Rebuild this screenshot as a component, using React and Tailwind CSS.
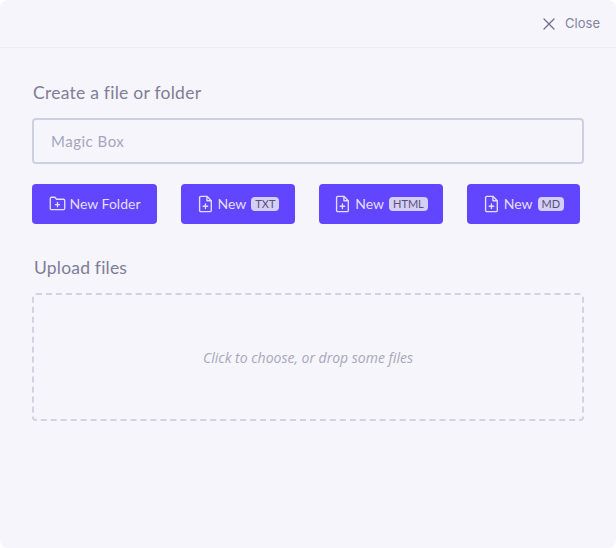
import { X } from "lucide-react";

const FolderPlus = () => (
    <svg width="17" height="17" viewBox="0 0 16 16" fill="none" stroke="currentColor" strokeWidth="1.25" strokeLinecap="round" strokeLinejoin="round" className="shrink-0">
        <path d="M1.2 3.2c0-.6.5-1.1 1.1-1.1h3.2l1.6 1.9h6.6c.6 0 1.1.5 1.1 1.1v7.6c0 .6-.5 1.1-1.1 1.1H2.3c-.6 0-1.1-.5-1.1-1.1V3.2z" />
        <path d="M8 7v4M6 9h4" />
    </svg>
);

const FilePlus = () => (
    <svg width="18" height="18" viewBox="0 0 16 16" fill="none" stroke="currentColor" strokeWidth="1.2" strokeLinecap="round" strokeLinejoin="round" className="shrink-0">
        <path d="M3.4 1.2h5.4l3.9 3.9v8.6c0 .6-.5 1.1-1.1 1.1H3.4c-.6 0-1.1-.5-1.1-1.1V2.3c0-.6.5-1.1 1.1-1.1z" />
        <path d="M8.8 1.4v3.7h3.7" />
        <path d="M7.5 8v4M5.5 10h4" />
    </svg>
);

const NewButton = ({ tag, width }) => (
    <button type="button" className={`flex h-10 items-center justify-center rounded bg-[#6246ff] pb-px text-[14px] text-[#e4defc] ${width}`}>
        <FilePlus />
        <span className="ml-[3px]">New</span>
        <span className="ml-[5px] rounded-[4px] bg-[#d5cff5] px-[4px] text-[11px] leading-[14px] text-[#56527a]">{tag}</span>
    </button>
);

export default function App() {
    return (
        <div className="h-[548px] w-[616px] rounded-lg bg-[#f5f5fb] font-['Lato',sans-serif]">
            <div className="flex h-[48px] items-center justify-end border-b border-[#ebebf3] pr-4">
                <button type="button" className="flex items-center gap-[6px] text-[13px] text-[#8583a0] font-['Inter',sans-serif]">
                    <X size={20} strokeWidth={1.5} className="text-[#706e8c]" />
                    Close
                </button>
            </div>
            <div className="px-8">
                <h2 className="mt-[33px] pl-px text-[17.5px] leading-6 tracking-[0.25px] text-[#7f7d98]">Create a file or folder</h2>
                <input
                    placeholder="Magic Box"
                    className="mt-[13px] block h-[46px] w-full rounded border-2 border-[#cfcfe3] bg-transparent px-[17px] text-[15px] tracking-[0.5px] outline-none placeholder:text-[#a5a5c0]"
                />
                <div className="mt-5 flex gap-6">
                    <button type="button" className="flex h-10 w-[125px] items-center justify-center rounded bg-[#6246ff] pb-px text-[14px] text-[#e4defc]">
                        <FolderPlus />
                        <span className="ml-[4px]">New Folder</span>
                    </button>
                    <NewButton tag="TXT" width="w-[114px]" />
                    <NewButton tag="HTML" width="w-[124px]" />
                    <NewButton tag="MD" width="w-[113px]" />
                </div>
                <h2 className="mt-8 pl-[2px] text-[17.5px] leading-6 tracking-[0.2px] text-[#7f7d98]">Upload files</h2>
                <div className="mt-[13px] flex h-[128px] items-center justify-center rounded border-2 border-dashed border-[#d2d2e2]">
                    <p className="font-['Open_Sans',sans-serif] text-[14px] italic text-[#a8a7bc]">Click to choose, or drop some files</p>
                </div>
            </div>
        </div>
    );
}
